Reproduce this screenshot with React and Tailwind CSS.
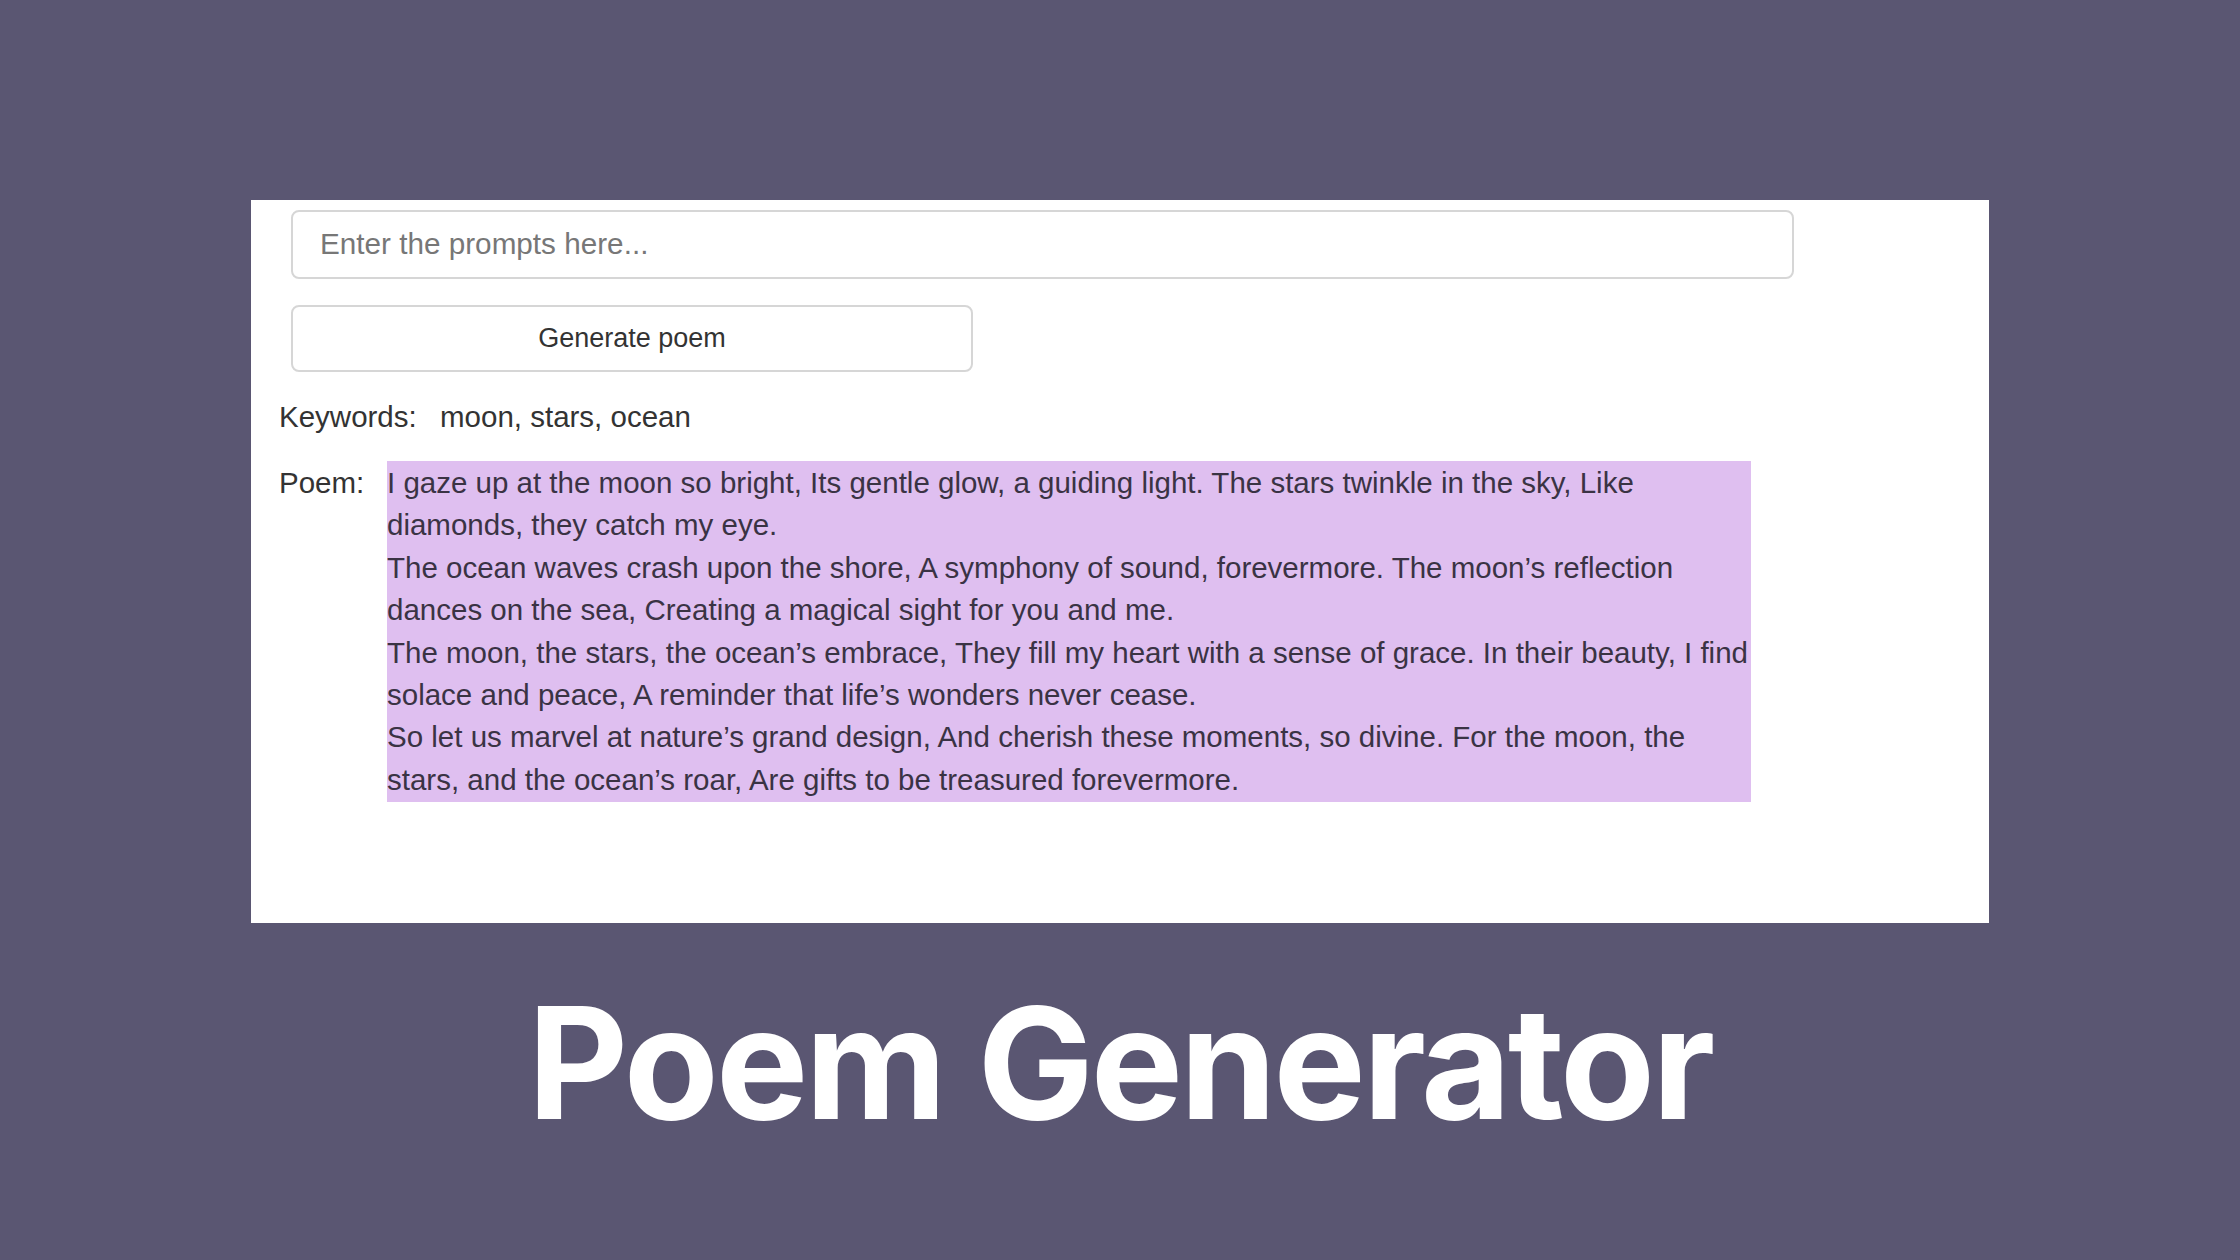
import React from "react";

const lines = [
  ["I gaze up at the moon so bright, Its gentle glow, a guiding light. The stars twinkle in the sky, Like", "diamonds, they catch my eye."],
  ["The ocean waves crash upon the shore, A symphony of sound, forevermore. The moon\u2019s reflection", "dances on the sea, Creating a magical sight for you and me."],
  ["The moon, the stars, the ocean\u2019s embrace, They fill my heart with a sense of grace. In their beauty, I find", "solace and peace, A reminder that life\u2019s wonders never cease."],
  ["So let us marvel at nature\u2019s grand design, And cherish these moments, so divine. For the moon, the", "stars, and the ocean\u2019s roar, Are gifts to be treasured forevermore."],
];

export default function App() {
  return (
    <div className="w-[2240px] h-[1260px] bg-[#5a5672] flex flex-col overflow-hidden">
      <div className="mt-[200px] ml-[251px] w-[1738px] h-[723px] bg-white pt-[10px] font-['Liberation_Sans',Arial,sans-serif] text-[#333]">
        <div className="ml-[40px] w-[1503px] h-[69px] border-2 border-[#d6d6d6] rounded-[8px] flex items-center pl-[27px] text-[29.7px] text-[#777]">
          Enter the prompts here...
        </div>
        <div className="ml-[40px] mt-[26px] w-[682px] h-[67px] border-2 border-[#d6d6d6] rounded-[8px] flex items-center justify-center text-[27px] text-[#333]">
          Generate poem
        </div>
        <div className="ml-[28px] mt-[24px] flex text-[29.5px] leading-[42px]">
          <span className="w-[161px]">Keywords:</span>
          <span>moon, stars, ocean</span>
        </div>
        <div className="ml-[28px] mt-[23px] flex text-[29.5px] leading-[42.4px]">
          <span className="w-[108px] pt-[1px]">Poem:</span>
          <div className="w-[1364px] bg-[#dfbff0] pt-[1px] pb-[1px] text-[#3a3344]">
            {lines.map((p, i) => (
              <p key={i} className="whitespace-nowrap">
                {p[0]}
                <br />
                {p[1]}
              </p>
            ))}
          </div>
        </div>
      </div>
      <div className="mt-[62px] flex justify-center">
        <h1 className="font-['Inter',sans-serif] font-bold text-white text-[155px] leading-none tracking-[-3px]">
          Poem Generator
        </h1>
      </div>
    </div>
  );
}
